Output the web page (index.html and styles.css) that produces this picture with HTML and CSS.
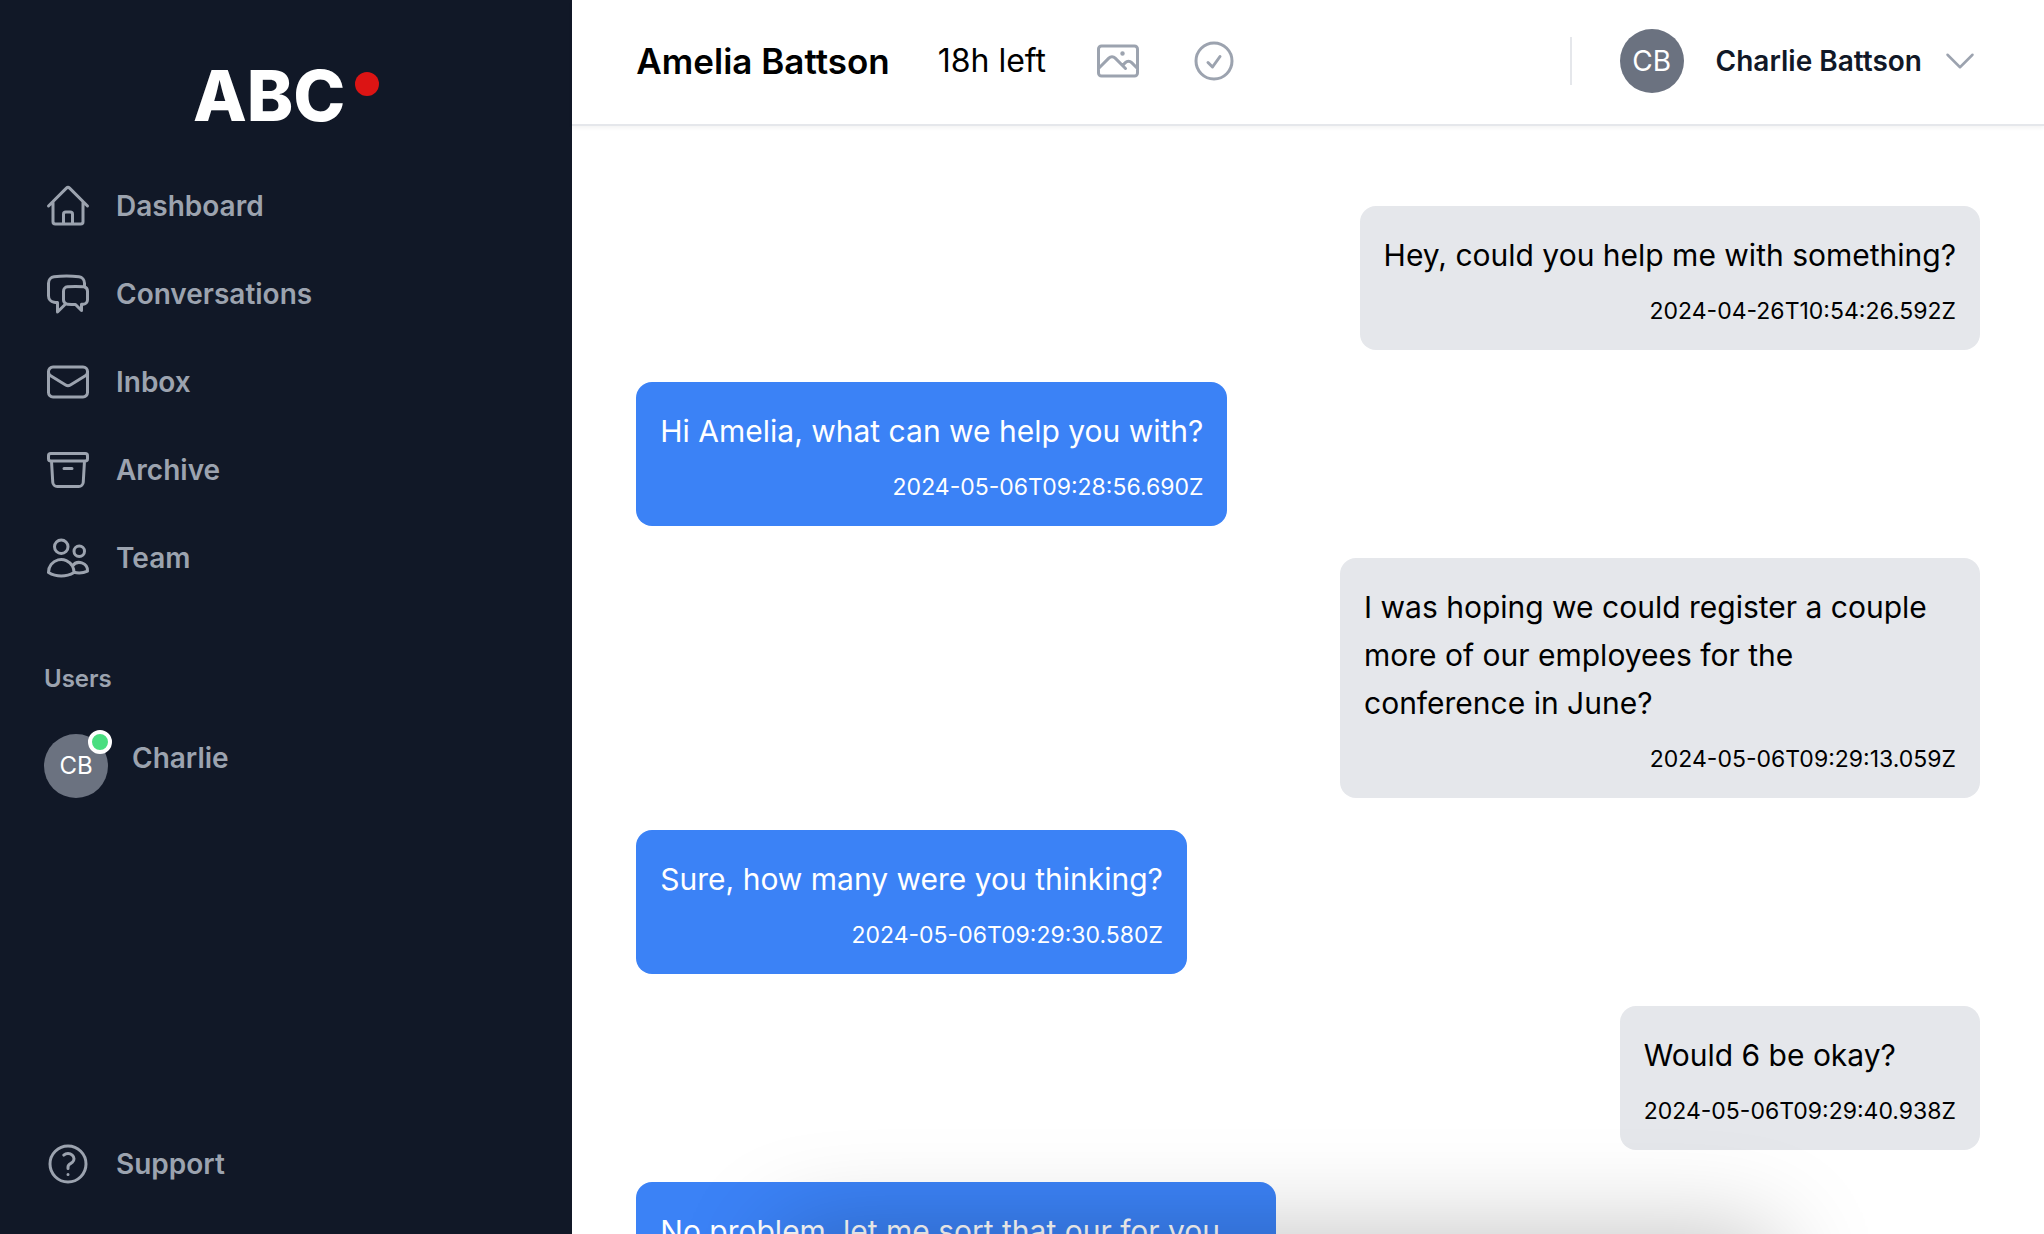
FILE: index.html
```html
<!DOCTYPE html>
<html lang="en">
<head>
<meta charset="utf-8">
<meta name="viewport" content="width=device-width, initial-scale=1">
<title>Conversation with Amelia Battson</title>
<link rel="stylesheet" href="styles.css">
</head>
<body>
<div class="app">
  <aside class="sidebar">
    <a class="logo" href="#"><span class="logo-word">ABC</span><span class="logo-dot"></span></a>
    <nav class="nav" aria-label="Main">
      <a class="nav-link" href="#">
        <svg class="icon" viewBox="0 0 24 24" aria-hidden="true"><path d="M2.25 12l8.954-8.955c.44-.439 1.152-.439 1.591 0L21.75 12M4.5 9.75v10.125c0 .621.504 1.125 1.125 1.125H9.75v-4.875c0-.621.504-1.125 1.125-1.125h2.25c.621 0 1.125.504 1.125 1.125V21h4.125c.621 0 1.125-.504 1.125-1.125V9.75M8.25 21h8.25"/></svg>
        Dashboard
      </a>
      <a class="nav-link" href="#">
        <svg class="icon" viewBox="0 0 24 24" aria-hidden="true"><path d="M20.25 8.511c.884.284 1.5 1.128 1.5 2.097v4.286c0 1.136-.847 2.1-1.98 2.193-.34.027-.68.052-1.02.072v3.091l-3-3c-1.354 0-2.694-.055-4.02-.163a2.115 2.115 0 01-.825-.242m9.345-8.334a2.126 2.126 0 00-.476-.095 48.64 48.64 0 00-8.048 0c-1.131.094-1.976 1.057-1.976 2.192v4.286c0 .837.46 1.58 1.155 1.951m9.345-8.334V6.637c0-1.621-1.152-3.026-2.76-3.235A48.455 48.455 0 0011.25 3c-2.115 0-4.198.137-6.24.402-1.608.209-2.76 1.614-2.76 3.235v6.226c0 1.621 1.152 3.026 2.76 3.235.577.075 1.157.14 1.74.194V21l4.155-4.155"/></svg>
        Conversations
      </a>
      <a class="nav-link" href="#">
        <svg class="icon" viewBox="0 0 24 24" aria-hidden="true"><path d="M21.75 6.75v10.5a2.25 2.25 0 01-2.25 2.25h-15a2.25 2.25 0 01-2.25-2.25V6.75m19.5 0A2.25 2.25 0 0019.5 4.5h-15a2.25 2.25 0 00-2.25 2.25m19.5 0v.243a2.25 2.25 0 01-1.07 1.916l-7.5 4.615a2.25 2.25 0 01-2.36 0L3.32 8.91a2.25 2.25 0 01-1.07-1.916V6.75"/></svg>
        Inbox
      </a>
      <a class="nav-link" href="#">
        <svg class="icon" viewBox="0 0 24 24" aria-hidden="true"><path d="M20.25 7.5l-.625 10.632a2.25 2.25 0 01-2.247 2.118H6.622a2.25 2.25 0 01-2.247-2.118L3.75 7.5M10 11.25h4M3.375 7.5h17.25c.621 0 1.125-.504 1.125-1.125v-1.5c0-.621-.504-1.125-1.125-1.125H3.375c-.621 0-1.125.504-1.125 1.125v1.5c0 .621.504 1.125 1.125 1.125z"/></svg>
        Archive
      </a>
      <a class="nav-link" href="#">
        <svg class="icon" viewBox="0 0 24 24" aria-hidden="true"><path d="M15 19.128a9.38 9.38 0 002.625.372 9.337 9.337 0 004.121-.952 4.125 4.125 0 00-7.533-2.493M15 19.128v-.003c0-1.113-.285-2.16-.786-3.07M15 19.128v.106A12.318 12.318 0 018.624 21c-2.331 0-4.512-.645-6.374-1.766l-.001-.109a6.375 6.375 0 0111.964-3.07M12 6.375a3.375 3.375 0 11-6.75 0 3.375 3.375 0 016.75 0zm8.25 2.25a2.625 2.625 0 11-5.25 0 2.625 2.625 0 015.25 0z"/></svg>
        Team
      </a>
    </nav>
    <section class="users">
      <h2 class="users-title">Users</h2>
      <a class="user" href="#">
        <span class="avatar avatar-small">CB<span class="presence"></span></span>
        <span>Charlie</span>
      </a>
    </section>
    <a class="nav-link support" href="#">
      <svg class="icon" viewBox="0 0 24 24" aria-hidden="true"><path d="M9.879 7.519c1.171-1.025 3.071-1.025 4.242 0 1.172 1.025 1.172 2.687 0 3.712-.203.179-.43.326-.67.442-.745.361-1.45.999-1.45 1.827v.75M21 12a9 9 0 11-18 0 9 9 0 0118 0zm-9 5.25h.008v.008H12v-.008z"/></svg>
      Support
    </a>
  </aside>

  <main class="main">
    <header class="topbar">
      <h1 class="contact">Amelia Battson</h1>
      <span class="remaining">18h left</span>
      <button class="icon-button" type="button" aria-label="Images">
        <svg class="icon" viewBox="0 0 24 24" aria-hidden="true"><path d="M2.25 15.75l5.159-5.159a2.25 2.25 0 013.182 0l5.159 5.159m-1.5-1.5l1.409-1.409a2.25 2.25 0 013.182 0l2.909 2.909m-18 3.75h16.5a1.5 1.5 0 001.5-1.5V6a1.5 1.5 0 00-1.5-1.5H3.75A1.5 1.5 0 002.25 6v12a1.5 1.5 0 001.5 1.5zm10.5-11.25h.008v.008h-.008V8.25zm.375 0a.375.375 0 11-.75 0 .375.375 0 01.75 0z"/></svg>
      </button>
      <button class="icon-button" type="button" aria-label="Mark as resolved">
        <svg class="icon" viewBox="0 0 24 24" aria-hidden="true"><path d="M9 12.75L11.25 15 15 9.75M21 12a9 9 0 11-18 0 9 9 0 0118 0z"/></svg>
      </button>
      <button class="profile" type="button">
        <span class="avatar">CB</span>
        <span class="profile-name">Charlie Battson</span>
        <svg class="chevron" viewBox="0 0 24 24" aria-hidden="true"><path d="M19.5 8.25l-7.5 7.5-7.5-7.5"/></svg>
      </button>
    </header>

    <div class="messages">
      <article class="message incoming">
        <p class="text">Hey, could you help me with something?</p>
        <time class="time">2024-04-26T10:54:26.592Z</time>
      </article>
      <article class="message outgoing">
        <p class="text">Hi Amelia, what can we help you with?</p>
        <time class="time">2024-05-06T09:28:56.690Z</time>
      </article>
      <article class="message incoming">
        <p class="text">I was hoping we could register a couple more of our employees for the conference in June?</p>
        <time class="time">2024-05-06T09:29:13.059Z</time>
      </article>
      <article class="message outgoing">
        <p class="text">Sure, how many were you thinking?</p>
        <time class="time">2024-05-06T09:29:30.580Z</time>
      </article>
      <article class="message incoming">
        <p class="text">Would 6 be okay?</p>
        <time class="time">2024-05-06T09:29:40.938Z</time>
      </article>
      <article class="message outgoing last">
        <p class="text">No problem, let me sort that our for you</p>
      </article>
    </div>
    <div class="bottom-shade"></div>
  </main>
</div>
</body>
</html>
```

FILE: styles.css
```css
*, *::before, *::after { box-sizing: border-box; }

body {
  margin: 0;
  background: #fff;
  color: #000;
  font-family: Inter, "Liberation Sans", sans-serif;
  font-size: 30px;
  line-height: 48px;
}

h1, h2, p { margin: 0; }
a { color: inherit; text-decoration: none; }

button {
  padding: 0;
  border: 0;
  background: none;
  color: inherit;
  font: inherit;
  cursor: pointer;
}

.app { display: flex; height: 100vh; overflow: hidden; }

.icon, .chevron {
  display: block;
  flex: none;
  width: 48px;
  height: 48px;
  fill: none;
  stroke: currentColor;
  stroke-width: 1.5;
  stroke-linecap: round;
  stroke-linejoin: round;
}

/* Sidebar */
.sidebar {
  display: flex;
  flex: none;
  flex-direction: column;
  width: 28%;
  padding: 56px 44px 46px;
  background: #111827;
  color: #9ca3af;
  font-size: 28px;
  font-weight: 600;
}

.logo {
  display: flex;
  align-items: flex-start;
  align-self: center;
  gap: 10px;
  margin-bottom: 46px;
  color: #fff;
}

.logo-word {
  font-size: 70px;
  font-weight: 800;
  line-height: 80px;
}

.logo-dot {
  width: 24px;
  height: 24px;
  margin-top: 16px;
  border-radius: 50%;
  background: #dc1414;
}

.nav { display: flex; flex-direction: column; gap: 40px; }
.nav-link { display: flex; align-items: center; gap: 24px; }

.users { margin-top: 81px; }
.users-title { font-size: 24px; font-weight: 600; line-height: 32px; }

.user {
  display: flex;
  gap: 24px;
  margin-top: 39px;
}

.avatar {
  position: relative;
  display: flex;
  flex: none;
  align-items: center;
  justify-content: center;
  width: 64px;
  height: 64px;
  border-radius: 50%;
  background: #6b7280;
  color: #fff;
  font-size: 28px;
  font-weight: 400;
}

.avatar-small { font-size: 24px; }

.presence {
  position: absolute;
  top: -4px;
  right: -4px;
  width: 24px;
  height: 24px;
  border: 4px solid #fff;
  border-radius: 50%;
  background: #4ade80;
}

.support { margin-top: auto; }

/* Conversation */
.main {
  position: relative;
  display: flex;
  flex: 1;
  flex-direction: column;
  min-width: 0;
}

.topbar {
  display: flex;
  flex: none;
  align-items: center;
  padding: 29px 64px 31px;
  border-bottom: 2px solid #e5e7eb;
  box-shadow: 0 2px 4px rgba(0, 0, 0, 0.05);
}

.contact { margin-right: 48px; font-size: 35px; font-weight: 600; }
.remaining { margin-right: 48px; font-size: 32px; }
.icon-button { margin-right: 48px; color: #9ca3af; }

.profile {
  display: flex;
  align-items: center;
  margin-left: auto;
  color: #111827;
  font-size: 28px;
  font-weight: 600;
}

.profile::before {
  width: 2px;
  height: 48px;
  margin-right: 48px;
  background: #e5e7eb;
  content: "";
}

.profile-name { margin: 0 18px 0 32px; }
.chevron { width: 40px; height: 40px; color: #9ca3af; }

.messages {
  display: flex;
  flex: 1;
  flex-direction: column;
  gap: 32px;
  min-height: 0;
  padding: 80px 64px 0;
  overflow: hidden;
}

.message {
  display: flex;
  flex: none;
  flex-direction: column;
  gap: 16px;
  max-width: 640px;
  padding: 25px 24px 23px;
  border-radius: 16px;
}

.incoming { align-self: flex-end; background: #e5e7eb; }
.outgoing { align-self: flex-start; background: #3b82f6; color: #fff; }
.last { width: 640px; }
.time { align-self: flex-end; font-size: 23px; line-height: 32px; }

/* Soft shadow rising from the panel below the fold */
.bottom-shade {
  position: absolute;
  top: 100%;
  right: 270px;
  left: 210px;
  height: 200px;
  border-radius: 16px;
  box-shadow: 0 0 100px rgba(0, 0, 0, 0.25);
  pointer-events: none;
}
```
